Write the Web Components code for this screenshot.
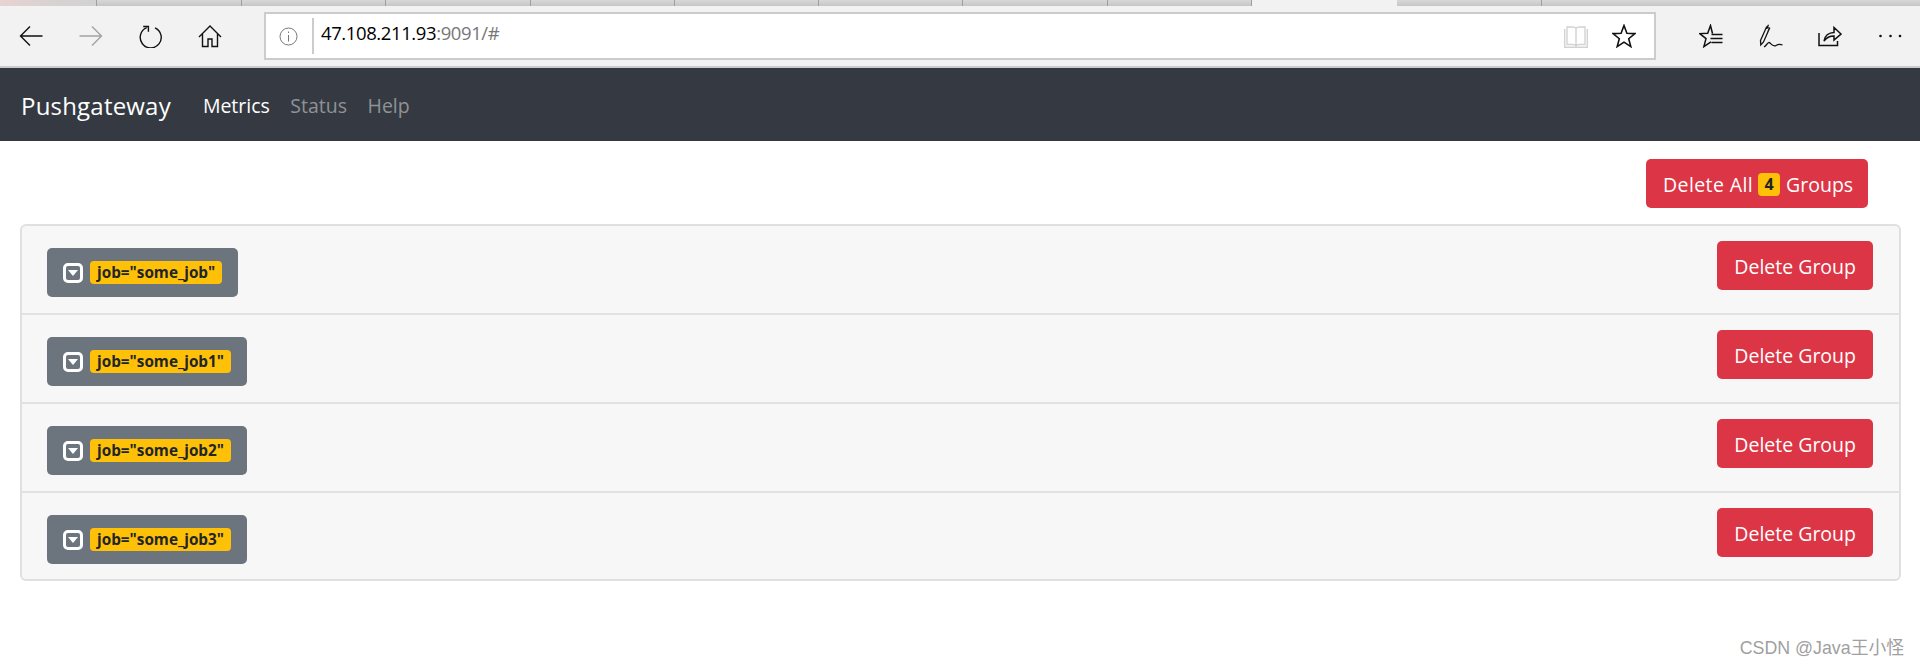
<!DOCTYPE html>
<html><head><meta charset="utf-8"><style>
html,body{margin:0;padding:0;background:#fff}
body{width:1920px;height:665px;overflow:hidden;font-family:"Open Sans","Noto Sans",sans-serif}
</style></head><body>
<browser-chrome></browser-chrome>
<app-nav></app-nav>
<main-page></main-page>
<script>
function def(name,html){customElements.define(name,class extends HTMLElement{constructor(){super();this.attachShadow({mode:'open'}).innerHTML=typeof html==='function'?html(this):html;}});}
const ic=(c,extra='')=>`<svg width="24" height="24" viewBox="0 0 24 24" fill="none" stroke="currentColor" stroke-width="1.4" ${extra}>${c}</svg>`;
const tabW=[145,144,145,144,144,144,145,144];
def('browser-chrome',`<style>
:host{display:block;height:68px;background:#f2f2f2;box-sizing:border-box;border-bottom:2px solid #c9cbcc}
.tabs{height:6px;display:flex}
.tabs i{display:block;box-sizing:border-box;border-right:1px solid #9f9f9f;background:linear-gradient(#d8d8d8,#c6c6c6);flex:none}
.tabs i.first{width:97px;background:linear-gradient(90deg,#e9d2d2,#d8d2d2 50%,#d2d2d2)}
.tabs i.act{background:#f2f2f2;border:0;width:145px}
.tabs i.last{flex:1;border:0}
.bar{height:60px;display:flex;align-items:center}
.btn{display:flex;width:24px;height:24px;align-items:center;justify-content:center;color:#111;flex:none}
.url{box-sizing:border-box;width:1392px;height:48px;margin-left:42px;border:2px solid #ccc;background:#fff;display:flex;align-items:center;flex:none}
.url .info{margin-left:13px;color:#777;display:flex}
.sep{width:2px;height:36px;background:#ccc;margin-left:14px;flex:none}
.addr{font:18.500px/24px "Open Sans",sans-serif;letter-spacing:-.4px;margin:-7px 0 0 7px;color:#000;flex:1;white-space:nowrap}
.addr span{color:#777}
</style>
<div class="tabs"><i class="first"></i>${tabW.map(w=>`<i style="width:${w}px"></i>`).join('')}<i class="act"></i><i style="width:145px"></i><i class="last"></i></div>
<div class="bar">
<span class="btn" style="margin-left:19px">${ic('<path d="M23.500 12H1.500M11 2.500 1.500 12l9.500 9.500"/>')}</span>
<span class="btn" style="margin-left:36px;color:#a2a2a2">${ic('<path d="M.5 12h22M13 2.500l9.500 9.500-9.500 9.500"/>')}</span>
<span class="btn" style="margin-left:36px">${ic('<path d="M16 3.800A10.500 10.500 0 1 1 7.700 3.700"/><path d="M4.200 2.500h5.200v5.300"/>')}</span>
<span class="btn" style="margin-left:35px">${ic('<path d="M1 13 12 2l11 11M4.500 10v12.500H10V15h4v7.500h5.500V10"/>')}</span>
<div class="url">
<span class="info"><svg width="19" height="19" viewBox="0 0 19 19" fill="none" stroke="currentColor"><circle cx="9.500" cy="9.500" r="8.500"/><path d="M9.500 8v6.500M9.500 4.500V6"/></svg></span>
<span class="sep"></span>
<span class="addr">47.108.211.93<span>:9091/#</span></span>
<span class="btn" style="color:#d2d2d2;margin-right:24px">${ic('<path d="M.7 5v18.300h22.600V5M3 3v17.500h6c1.300 0 2.400.5 3 1.500.6-1 1.700-1.500 3-1.500h6V3h-6c-1.300 0-2.400.5-3 1.500C11.400 3.500 10.300 3 9 3zM12 4.500V22"/>')}</span>
<span class="btn" style="margin-right:18px">${ic('<path d="m12 1.500 2.900 7.700 8.100.4-6.300 5.100 2.100 7.900L12 18.200l-6.800 4.400 2.100-7.900L1 9.600l8.100-.4z" stroke-width="1.600"/>')}</span>
</div>
<span class="btn" style="margin-left:43px">${ic('<path d="M13.500 9.500 11.500 1.500 8.700 9.200.8 9.600l6.200 5-2.100 8 7.100-4.700M12.500 10.500H23.500M11.500 14.500H23.500M12.500 18.500H23.500" stroke-width="1.500"/>')}</span>
<span class="btn" style="margin-left:36px">${ic('<path d="M1.500 16.500 7.500 3l3 1.300-6 13.700L1.800 21zM9.500.8l-1.800 3.800M10.700 3.500l-2 4.500M5 23c2.500-1 4-6 6-4s3.500 4 6 2.500 4-1.500 6.500-.5" stroke-width="1.300"/>')}</span>
<span class="btn" style="margin-left:35px">${ic('<path d="M1 9v12.500h18.500V17M6 17c.8-5 4.500-8.500 10-8.500V3.500L23 10l-7 6v-4c-4 0-7.500 1.500-10 5z" stroke-width="1.500"/>')}</span>
<span class="btn" style="margin-left:36px">${ic('<g fill="currentColor" stroke="none"><circle cx="2.500" cy="12" r="1.300"/><circle cx="12.500" cy="12" r="1.300"/><circle cx="22" cy="12" r="1.300"/></g>')}</span>
</div>`);
def('app-nav',`<style>
:host{display:flex;align-items:center;height:73px;background:#353a42;font-family:"Open Sans",sans-serif;box-sizing:border-box;padding:1px 0 0 21px}
.brand{font-size:24px;color:#fff;letter-spacing:.2px;margin-right:32px}
a{font-size:19.500px;color:#8f9296;margin-right:20.500px}
a.on{color:#fff}
</style><span class="brand">Pushgateway</span><a class="on">Metrics</a><a>Status</a><a>Help</a>`);
def('app-badge',`<style>
:host{display:inline-block;background:#ffc107;color:#212529;font:700 15.300px/23px "Open Sans",sans-serif;border-radius:4px;padding:0 7px;white-space:nowrap}
</style><slot></slot>`);
def('danger-button',`<style>
:host{display:inline-flex;align-items:center;height:49px;box-sizing:border-box;background:#dc3545;color:#fff;border-radius:5px;font:19.500px "Open Sans",sans-serif;padding:1px 17px 0;white-space:nowrap;flex:none}
</style><slot></slot>`);
def('group-row',h=>`<style>
:host{display:flex;justify-content:space-between;align-items:flex-start;height:89px;box-sizing:border-box;padding:15px 26px 0 25px;border-bottom:2px solid #e2e2e2}
:host(:last-child){border-bottom:0}
.tag{margin-top:7px;height:49px;box-sizing:border-box;background:#6c757d;border-radius:5px;display:flex;align-items:center;padding:0 16px}
.tog{width:20px;height:20px;box-sizing:border-box;border:3px solid #fff;border-radius:5px;background:#6c757d;display:flex;align-items:center;justify-content:center;margin-right:7px}
.tog i{display:block;width:0;height:0;border-left:5px solid transparent;border-right:5px solid transparent;border-top:6px solid #fff}
</style><div class="tag"><span class="tog"><i></i></span><app-badge>${h.getAttribute('job')}</app-badge></div><danger-button>Delete Group</danger-button>`);
def('main-page',`<style>
:host{display:block;position:relative;height:524px}
.top{display:flex;justify-content:flex-end;padding:18px 52px 0 0;height:83px;box-sizing:border-box}
.top danger-button{width:222px}
.top .da{letter-spacing:.4px}
.card{margin:0 19px 0 20px;box-sizing:border-box;border:2px solid #e0e0e0;border-radius:6px;background:#f7f7f7;height:357px}
.wm{position:absolute;right:16px;top:492px;font:17.800px "Liberation Sans","Noto Sans CJK SC",sans-serif;color:#a0a0a0}
app-badge{margin:0 6px 0 5px;padding:0 6.400px;font-size:16px}
</style>
<div class="top"><danger-button><span class="da">Delete All</span><app-badge>4</app-badge><span>Groups</span></danger-button></div>
<div class="card">
<group-row job='job="some_job"'></group-row>
<group-row job='job="some_job1"'></group-row>
<group-row job='job="some_job2"'></group-row>
<group-row job='job="some_job3"'></group-row>
</div>
<div class="wm">CSDN @Java王小怪</div>`);
</script>
</body></html>
